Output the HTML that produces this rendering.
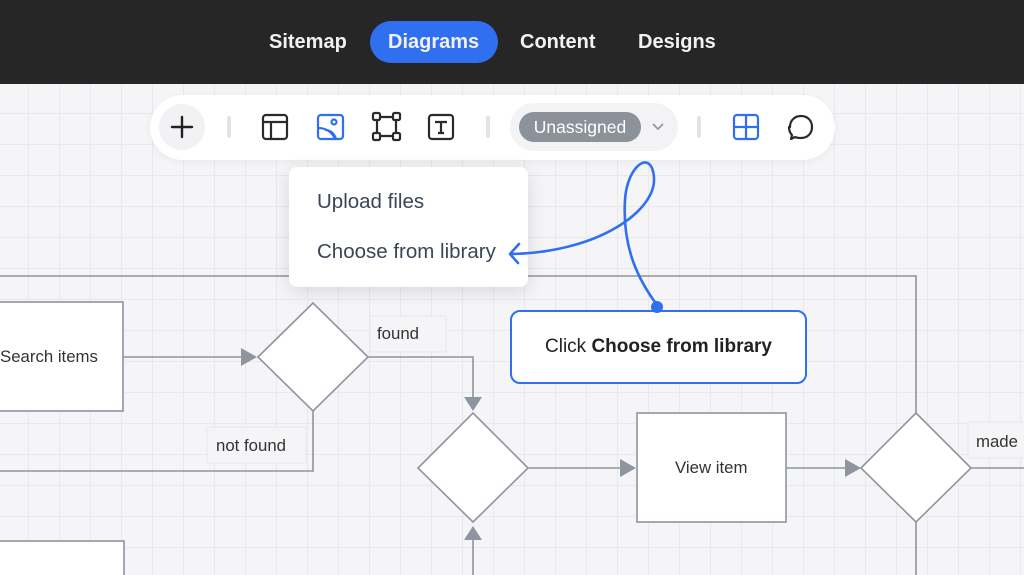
<!DOCTYPE html>
<html><head><meta charset="utf-8"><style>
*{margin:0;padding:0;box-sizing:border-box}
body{width:1024px;height:575px;overflow:hidden;position:relative;font-family:"Liberation Sans",sans-serif;background:#f5f5f7}
.hdr{position:absolute;left:0;top:0;width:1024px;height:84px;background:#262626}
.nav{position:absolute;top:31px;color:#f2f2f2;font-size:20px;font-weight:bold;white-space:nowrap}
.pill{position:absolute;left:370px;top:21px;width:128px;height:42px;border-radius:21px;background:#2f6ff0}
.canvas{position:absolute;left:0;top:84px;width:1024px;height:491px;
background-color:#f5f5f7;
background-image:linear-gradient(to right,#e9e9ed 1px,transparent 1px),linear-gradient(to bottom,#e9e9ed 1px,transparent 1px);
background-size:31px 31px;background-position:28px 29px}
.tb{position:absolute;left:150px;top:95px;width:685px;height:65px;border-radius:33px;background:#fff;box-shadow:0 2px 8px rgba(0,0,0,.05)}
.dd{position:absolute;left:289px;top:167px;width:239px;height:120px;background:#fff;border-radius:8px;box-shadow:0 4px 18px rgba(0,0,0,.12)}
.dd div{position:absolute;left:28px;font-size:20.5px;color:#3b4557}
.co{position:absolute;left:510px;top:310px;width:297px;height:74px;border:2.5px solid #2f6ff0;border-radius:10px;background:#fff;font-size:19px;color:#222;text-align:center;line-height:70px}
</style></head><body>
<div class="hdr"></div>
<div class="pill"></div>
<div class="nav" style="left:269px">Sitemap</div>
<div class="nav" style="left:388px">Diagrams</div>
<div class="nav" style="left:520px">Content</div>
<div class="nav" style="left:638px">Designs</div>
<div class="canvas"></div>
<svg style="position:absolute;left:0;top:0" width="1024" height="575" font-family="Liberation Sans, sans-serif">
<g stroke="#8e959e" stroke-width="1.6" fill="none">
<polyline points="0,276 916,276 916,413"/>
<line x1="123" y1="357" x2="246" y2="357"/>
<polyline points="368,357 473,357 473,400"/>
<polyline points="313,411 313,471 0,471"/>
<line x1="528" y1="468" x2="625" y2="468"/>
<line x1="786" y1="468" x2="850" y2="468"/>
<line x1="971" y1="468" x2="1024" y2="468"/>
<line x1="916" y1="522" x2="916" y2="575"/>
<line x1="473" y1="540" x2="473" y2="575"/>
</g>
<g fill="#8e959e">
<polygon points="241,348 257,357 241,366"/>
<polygon points="464,397 482,397 473,411"/>
<polygon points="620,459 636,468 620,477"/>
<polygon points="845,459 861,468 845,477"/>
<polygon points="464,540 482,540 473,526"/>
</g>
<g fill="#fff" stroke="#8e959e" stroke-width="1.6">
<rect x="-2" y="302" width="125" height="109"/>
<rect x="-2" y="541" width="126" height="40"/>
<polygon points="258,357 313,303 368,357 313,411"/>
<polygon points="418,468 473,413 528,468 473,522"/>
<rect x="637" y="413" width="149" height="109"/>
<polygon points="861,468 916,413 971,468 916,522"/>
</g>
<g fill="#f5f5f7" stroke="#e8e8ec" stroke-width="1">
<rect x="370" y="316" width="76" height="36"/>
<rect x="207" y="427" width="99" height="36"/>
<rect x="968" y="422" width="60" height="36"/>
</g>
<g fill="#333" font-size="16.8">
<text x="0" y="362">Search items</text>
<text x="377" y="339">found</text>
<text x="216" y="451">not found</text>
<text x="675" y="473">View item</text>
<text x="976" y="447">made</text>
</g>
</svg>
<div class="tb"></div>
<div class="dd"><div style="top:23px">Upload files</div><div style="top:73px">Choose from library</div></div>
<div class="co">Click <b>Choose from library</b></div>
<svg style="position:absolute;left:0;top:0" width="1024" height="575">
<circle cx="182" cy="127" r="23" fill="#f2f2f4"/>
<path d="M172 127h20M182 117v20" stroke="#222" stroke-width="2.4" stroke-linecap="round"/>
<g stroke="#e3e3e6" stroke-width="4" stroke-linecap="round"><line x1="229" y1="118" x2="229" y2="136"/><line x1="488" y1="118" x2="488" y2="136"/><line x1="699" y1="118" x2="699" y2="136"/></g>
<g fill="none" stroke="#2a2a2a" stroke-width="2.2" stroke-linejoin="round">
<rect x="263" y="115" width="24" height="24" rx="3"/><path d="M263 122h24M271 122v17"/>
<rect x="377" y="117" width="19" height="19"/>
<rect x="373" y="113" width="7" height="7" rx="1.5" fill="#fff"/><rect x="393" y="113" width="7" height="7" rx="1.5" fill="#fff"/>
<rect x="373" y="133" width="7" height="7" rx="1.5" fill="#fff"/><rect x="393" y="133" width="7" height="7" rx="1.5" fill="#fff"/>
<rect x="429" y="115" width="24" height="24" rx="3"/><path d="M435 122h12M441 122v11M438 133h6"/>
<path d="M790 127c0-7 5-11 11-11s11 4 11 11-5 11-11 11c-2 0-4 0-6-1l-4 2 1-4c-2-2-3-5-3-8z"/>
</g>
<g fill="none" stroke="#2f6ff0" stroke-width="2.2">
<rect x="318" y="115" width="25" height="24" rx="3"/>
<path d="M318 128c8 0 14 4 17 11M325 130c5 0 9 3 11 9"/>
<circle cx="334" cy="122" r="2.5"/>
<rect x="734" y="115" width="24" height="24" rx="3"/><path d="M734 127h24M746 115v24"/>
</g>
<rect x="510" y="103" width="168" height="48" rx="24" fill="#f3f3f5"/>
<rect x="519" y="112" width="122" height="30" rx="15" fill="#8b929a"/>
<text x="580" y="133" text-anchor="middle" fill="#fff" font-family="Liberation Sans, sans-serif" font-size="17.5">Unassigned</text>
<path d="M653 124l5 5 5-5" fill="none" stroke="#999" stroke-width="1.8"/>
<path d="M657 305C640 282 622 250 625 200C627 165 652 148 654 178C656 210 600 252 512 254" fill="none" stroke="#2f6ff0" stroke-width="2.6" stroke-linecap="round"/>
<path d="M519 244l-9 10 8 9" fill="none" stroke="#2f6ff0" stroke-width="2.6" stroke-linecap="round" stroke-linejoin="round"/>
<circle cx="657" cy="307" r="6" fill="#2f6ff0"/>
</svg>
</body></html>
